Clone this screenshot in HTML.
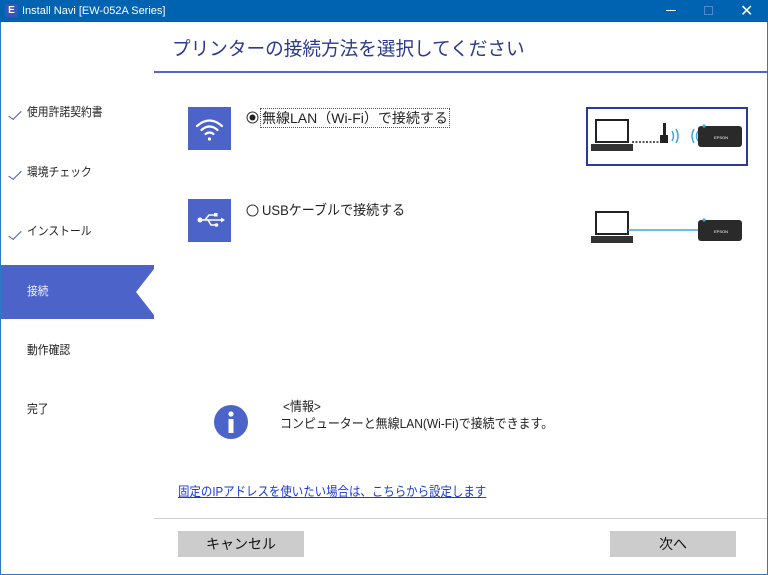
<!DOCTYPE html>
<html><head><meta charset="utf-8"><style>
*{margin:0;padding:0;box-sizing:border-box}
body{width:768px;height:575px;position:relative;background:#fff;font-family:"Liberation Sans","Noto Sans CJK JP",sans-serif;overflow:hidden;color:#222}
.a{position:absolute}
.sx{transform-origin:left top;white-space:nowrap}
.tb{left:0;top:0;width:768px;height:22px;background:#0063b1;color:#fff;font-size:11px}
.side{font-size:12px;color:#222;transform:scaleX(0.9);transform-origin:left top;white-space:nowrap}
.ck{width:12px;height:6px;border-left:1px solid #4a5fc4;border-bottom:1px solid #4a5fc4;transform:rotate(-45deg) skewX(10deg)}
.btn{background:#cccccc;font-size:14px;text-align:center;line-height:26px;color:#111}
</style></head><body>
<div class="a tb">
 <div class="a" style="left:5px;top:4px;width:13px;height:13px;background:#3a55b8;color:#fff;font-size:10px;font-weight:bold;text-align:center;line-height:13px">E</div>
 <div class="a" style="left:22px;top:5px">Install Navi [EW-052A Series]</div>
 <div class="a" style="left:666px;top:10px;width:10px;height:1px;background:#fff"></div>
 <div class="a" style="left:704px;top:6px;width:9px;height:9px;border:1px solid #4d8ad0"></div>
 <div class="a" style="left:740px;top:1px;font-size:16px">✕</div>
</div>
<div class="a" style="left:0;top:22px;width:1px;height:553px;background:#2b7bc4"></div>
<div class="a" style="left:767px;top:22px;width:1px;height:553px;background:#2b7bc4"></div>
<div class="a" style="left:0;top:574px;width:768px;height:1px;background:#2b7bc4"></div>

<div class="a sx" style="left:172px;top:34px;font-size:19px;color:#2b3a8c;transform:scaleX(0.98)">プリンターの接続方法を選択してください</div>
<div class="a" style="left:154px;top:71px;width:613px;height:2px;background:#5566c8"></div>

<div class="a ck" style="left:9px;top:111px"></div>
<div class="a side" style="left:27px;top:103px">使用許諾契約書</div>
<div class="a ck" style="left:9px;top:171px"></div>
<div class="a side" style="left:27px;top:163px">環境チェック</div>
<div class="a ck" style="left:9px;top:231px"></div>
<div class="a side" style="left:27px;top:222px">インストール</div>
<div class="a" style="left:1px;top:265px;width:153px;height:54px;background:#4c63c9"></div>
<svg class="a" style="left:136px;top:265px" width="18" height="54"><polygon points="18,4 18,50 0,27" fill="#fff"/></svg>
<div class="a side" style="left:27px;top:282px;color:#eef">接続</div>
<div class="a side" style="left:27px;top:341px">動作確認</div>
<div class="a side" style="left:27px;top:400px">完了</div>

<div class="a" style="left:188px;top:107px;width:43px;height:43px;background:#4c63c9"></div>
<svg class="a" style="left:188px;top:107px" width="43" height="43" fill="none" stroke="#fff" stroke-width="2.2" stroke-linecap="round">
<path d="M9 19 Q21.5 8 34 19"/><path d="M13.5 23 Q21.5 16 29.5 23"/><path d="M17.5 27 Q21.5 24 25.5 27"/><circle cx="21.5" cy="32" r="1.6" fill="#fff" stroke="none"/></svg>
<div class="a" style="left:188px;top:199px;width:43px;height:43px;background:#4c63c9"></div>
<svg class="a" style="left:188px;top:199px" width="43" height="43" fill="none" stroke="#fff" stroke-width="1.6">
<circle cx="12" cy="21" r="2.5" fill="#fff" stroke="none"/><path d="M12 21 H34"/><path d="M17 21 L21 16 H26"/><path d="M20 21 L23 26 H27"/><rect x="26" y="14" width="3.5" height="3.5" fill="#fff" stroke="none"/><circle cx="28.5" cy="26" r="1.8" fill="#fff" stroke="none"/><polygon points="33,18.5 37,21 33,23.5" fill="#fff" stroke="none"/></svg>

<svg class="a" style="left:246px;top:111px" width="13" height="13"><circle cx="6.5" cy="6.5" r="5.5" fill="#fff" stroke="#333"/><circle cx="6.5" cy="6.5" r="3" fill="#222"/></svg>
<div class="a" style="left:260px;top:108px;font-size:14px;border:1px dotted #555;padding:0 1px;line-height:18px">無線LAN（Wi-Fi）で接続する</div>
<svg class="a" style="left:246px;top:204px" width="13" height="13"><circle cx="6.5" cy="6.5" r="5.5" fill="#fff" stroke="#333"/></svg>
<div class="a sx" style="left:262px;top:201px;font-size:14px;line-height:18px;transform:scaleX(0.93)">USBケーブルで接続する</div>

<div class="a" style="left:586px;top:107px;width:162px;height:59px;border:2px solid #2a3a9a"></div>
<svg class="a" style="left:588px;top:109px" width="158" height="55">
<rect x="7" y="10" width="34" height="24" fill="#222"/><rect x="9" y="12" width="30" height="20" fill="#fff"/><rect x="3" y="35" width="42" height="7" fill="#333"/>
<path d="M44 33 H76" stroke="#222" stroke-width="1.5" stroke-dasharray="2 1.5"/>
<rect x="75" y="14" width="3" height="18" fill="#222"/><rect x="72" y="26" width="8" height="8" fill="#222"/>
<path d="M84 22 q3 5 0 10 M88 20 q4 7 0 14 M106 20 q-4 7 0 14 M110 22 q-3 5 0 10" stroke="#3aa8e0" stroke-width="1.5" fill="none"/>
<rect x="110" y="17" width="44" height="21" rx="3" fill="#2a2a2a"/><circle cx="116" cy="17" r="1.6" fill="#3aa8e0"/><text x="126" y="30" font-size="4" fill="#fff" font-family="Liberation Sans">EPSON</text>
</svg>
<svg class="a" style="left:588px;top:205px" width="158" height="50">
<rect x="7" y="6" width="34" height="24" fill="#222"/><rect x="9" y="8" width="30" height="20" fill="#fff"/><rect x="3" y="31" width="42" height="7" fill="#333"/>
<path d="M40 25 H110" stroke="#3aa8e0" stroke-width="1.5"/>
<rect x="110" y="15" width="44" height="21" rx="3" fill="#2a2a2a"/><circle cx="116" cy="15" r="1.6" fill="#3aa8e0"/><text x="126" y="28" font-size="4" fill="#fff" font-family="Liberation Sans">EPSON</text>
</svg>

<svg class="a" style="left:213px;top:404px" width="36" height="36"><circle cx="18" cy="18" r="17" fill="#4c63c9"/><circle cx="18" cy="10" r="2.6" fill="#fff"/><rect x="15.5" y="15" width="5" height="14" fill="#fff"/></svg>
<div class="a sx" style="left:283px;top:396px;font-size:13px;transform:scaleX(0.92)">&lt;情報&gt;</div>
<div class="a sx" style="left:280px;top:413px;font-size:13px;transform:scaleX(0.92)">コンピューターと無線LAN(Wi-Fi)で接続できます。</div>

<div class="a sx" style="left:178px;top:481px;font-size:13px;color:#1a3ad6;text-decoration:underline;transform:scaleX(0.88)">固定のIPアドレスを使いたい場合は、こちらから設定します</div>
<div class="a" style="left:154px;top:518px;width:613px;height:1px;background:#d0d0d0"></div>
<div class="a btn" style="left:178px;top:531px;width:126px;height:26px">キャンセル</div>
<div class="a btn" style="left:610px;top:531px;width:126px;height:26px">次へ</div>
</body></html>
